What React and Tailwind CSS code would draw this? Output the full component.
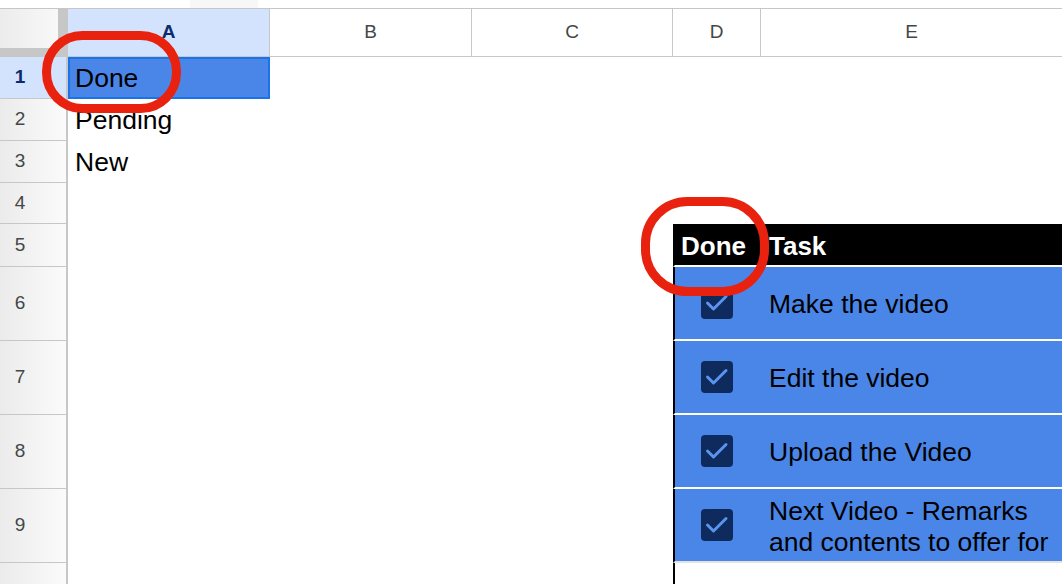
import { Fragment } from 'react';

const cols = ['A', 'B', 'C', 'D', 'E'];

// row heights include the 1px grid line under each row
const rows = [
  { n: 1, h: 'h-[42px]' },
  { n: 2, h: 'h-[42px]' },
  { n: 3, h: 'h-[42px]' },
  { n: 4, h: 'h-[41px]' },
  { n: 5, h: 'h-[43px]' },
  { n: 6, h: 'h-[74px]' },
  { n: 7, h: 'h-[74px]' },
  { n: 8, h: 'h-[74px]' },
  { n: 9, h: 'h-[74px]' },
  { n: 10, h: 'h-[74px]' },
];

const colA = { 1: 'Done', 2: 'Pending', 3: 'New' };

const tasks = {
  6: ['Make the video'],
  7: ['Edit the video'],
  8: ['Upload the Video'],
  9: ['Next Video - Remarks', 'and contents to offer for'],
};

const Checkbox = () => (
  <div className="w-8 h-8 rounded-[4px] bg-[#0f2a5c] flex items-center justify-center">
    <svg width="32" height="32" viewBox="0 0 32 32" fill="none">
      <polyline points="6.5,16 12.5,22 25,9.5" stroke="#5a94ef" strokeWidth="3" strokeLinecap="round" strokeLinejoin="round" />
    </svg>
  </div>
);

const RowHeader = ({ n, h }) => {
  const active = n === 1;
  return (
    <div
      className={`${h} border-r-2 border-b border-[#c7c7c7] flex items-center justify-center pr-[26px] text-[19px] ${
        active ? 'bg-[#d3e3fd] text-[#0b2c6b] font-bold' : 'bg-linear-to-r from-[#ebebeb] to-[#fbfbfb] text-[#444746]'
      }`}
    >
      {/* row 10's number sits below the fold */}
      {n < 10 ? n : null}
    </div>
  );
};

const App = () => {
  return (
    <div className="relative w-[1062px] h-[584px] overflow-hidden bg-white font-['Liberation_Sans',Arial,sans-serif]">
      {/* strip above the column headers */}
      <div className="h-2 flex">
        <div className="ml-[190px] w-[68px] bg-[#f7f7f7]" />
      </div>

      <div className="border-t border-[#c4c7c5] grid grid-cols-[68px_202px_202px_201px_88px_1fr]">
        {/* corner with frozen bars */}
        <div className="h-[48px] border-r-[10px] border-b-[9px] border-[#c7c7c7] bg-linear-to-r from-[#ececec] to-[#f8f8f8]" />
        {cols.map((c) => (
          <div
            key={c}
            className={`h-[48px] border-b border-[#c7c7c7] flex items-center justify-center text-[19px] ${
              c === 'E' ? '' : 'border-r'
            } ${c === 'A' ? 'bg-[#d3e3fd] text-[#0b2c6b] font-bold' : 'text-[#444746]'}`}
          >
            {c}
          </div>
        ))}

        {rows.map(({ n, h }) => {
          const inTable = n >= 5;
          return (
            <Fragment key={n}>
              <RowHeader n={n} h={h} />

              {/* column A */}
              <div
                className={`${h} flex items-center pt-[1px] text-[26.5px] text-black ${
                  n === 1 ? 'bg-[#4a86e8] border-2 border-[#1a73e8] pl-[5px]' : 'pl-[7px]'
                }`}
              >
                {colA[n]}
              </div>
              <div className={h} />
              <div className={h} />

              {/* column D */}
              {n === 5 ? (
                <div className={`${h} bg-black border-l-2 border-black border-b-2 border-b-white flex items-center pt-[3px] pl-[6px] text-[26px] font-bold text-white`}>
                  Done
                </div>
              ) : tasks[n] ? (
                <div className={`${h} bg-[#4a86e8] border-l-2 border-black border-b-2 ${n === 9 ? 'border-b-[#e3e3e3]' : 'border-b-white'} flex items-center justify-center pr-[2px]`}>
                  <Checkbox />
                </div>
              ) : inTable ? (
                <div className={`${h} border-l-2 border-black`} />
              ) : (
                <div className={h} />
              )}

              {/* column E */}
              {n === 5 ? (
                <div className={`${h} bg-black border-b-2 border-white flex items-center pt-[3px] pl-2 text-[26px] font-bold text-white`}>
                  Task
                </div>
              ) : tasks[n] ? (
                <div className={`${h} bg-[#4a86e8] border-b-2 ${n === 9 ? 'border-[#e3e3e3]' : 'border-white'} flex flex-col justify-center pt-[3px] pl-2 text-[26.5px] leading-[31px] text-black whitespace-nowrap`}>
                  {tasks[n].map((t) => (
                    <span key={t}>{t}</span>
                  ))}
                </div>
              ) : (
                <div className={h} />
              )}
            </Fragment>
          );
        })}
      </div>

      {/* red annotation circles */}
      <svg className="absolute inset-0 pointer-events-none" width="1062" height="584" viewBox="0 0 1062 584" fill="none">
        <rect x="46.5" y="35.5" width="130" height="73" rx="36" stroke="#e8220f" strokeWidth="9" />
        <rect x="645.5" y="201.5" width="119" height="90" rx="42" stroke="#e8220f" strokeWidth="9" />
      </svg>
    </div>
  );
};

export default App;
